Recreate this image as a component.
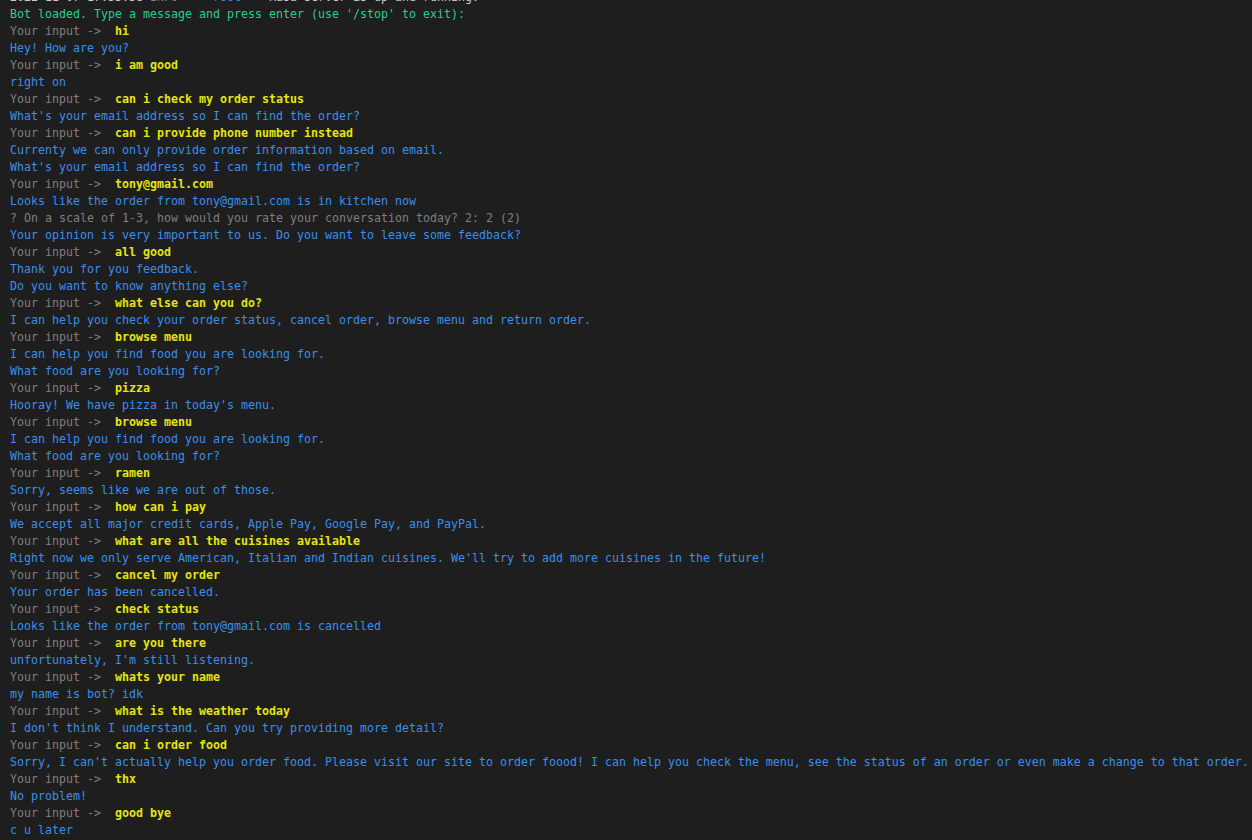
type Line =
  | { kind: 'in'; text: string }
  | { kind: 'bot'; text: string }
  | { kind: 'info'; text: string }
  | { kind: 'ask'; text: string }
  | { kind: 'log' };

const lines: Line[] = [
  { kind: 'log' },
  { kind: 'info', text: "Bot loaded. Type a message and press enter (use '/stop' to exit):" },
  { kind: 'in', text: 'hi' },
  { kind: 'bot', text: 'Hey! How are you?' },
  { kind: 'in', text: 'i am good' },
  { kind: 'bot', text: 'right on' },
  { kind: 'in', text: 'can i check my order status' },
  { kind: 'bot', text: "What's your email address so I can find the order?" },
  { kind: 'in', text: 'can i provide phone number instead' },
  { kind: 'bot', text: 'Currenty we can only provide order information based on email.' },
  { kind: 'bot', text: "What's your email address so I can find the order?" },
  { kind: 'in', text: 'tony@gmail.com' },
  { kind: 'bot', text: 'Looks like the order from tony@gmail.com is in kitchen now' },
  { kind: 'ask', text: '? On a scale of 1-3, how would you rate your conversation today? 2: 2 (2)' },
  { kind: 'bot', text: 'Your opinion is very important to us. Do you want to leave some feedback?' },
  { kind: 'in', text: 'all good' },
  { kind: 'bot', text: 'Thank you for you feedback.' },
  { kind: 'bot', text: 'Do you want to know anything else?' },
  { kind: 'in', text: 'what else can you do?' },
  { kind: 'bot', text: 'I can help you check your order status, cancel order, browse menu and return order.' },
  { kind: 'in', text: 'browse menu' },
  { kind: 'bot', text: 'I can help you find food you are looking for.' },
  { kind: 'bot', text: 'What food are you looking for?' },
  { kind: 'in', text: 'pizza' },
  { kind: 'bot', text: "Hooray! We have pizza in today's menu." },
  { kind: 'in', text: 'browse menu' },
  { kind: 'bot', text: 'I can help you find food you are looking for.' },
  { kind: 'bot', text: 'What food are you looking for?' },
  { kind: 'in', text: 'ramen' },
  { kind: 'bot', text: 'Sorry, seems like we are out of those.' },
  { kind: 'in', text: 'how can i pay' },
  { kind: 'bot', text: 'We accept all major credit cards, Apple Pay, Google Pay, and PayPal.' },
  { kind: 'in', text: 'what are all the cuisines available' },
  { kind: 'bot', text: "Right now we only serve American, Italian and Indian cuisines. We'll try to add more cuisines in the future!" },
  { kind: 'in', text: 'cancel my order' },
  { kind: 'bot', text: 'Your order has been cancelled.' },
  { kind: 'in', text: 'check status' },
  { kind: 'bot', text: 'Looks like the order from tony@gmail.com is cancelled' },
  { kind: 'in', text: 'are you there' },
  { kind: 'bot', text: "unfortunately, I'm still listening." },
  { kind: 'in', text: 'whats your name' },
  { kind: 'bot', text: 'my name is bot? idk' },
  { kind: 'in', text: 'what is the weather today' },
  { kind: 'bot', text: "I don't think I understand. Can you try providing more detail?" },
  { kind: 'in', text: 'can i order food' },
  { kind: 'bot', text: "Sorry, I can't actually help you order food. Please visit our site to order foood! I can help you check the menu, see the status of an order or even make a change to that order." },
  { kind: 'in', text: 'thx' },
  { kind: 'bot', text: 'No problem!' },
  { kind: 'in', text: 'good bye' },
  { kind: 'bot', text: 'c u later' },
];

function Row({ line }: { line: Line }) {
  if (line.kind === 'log') {
    // rasa 시작 로그 (위쪽이 잘려 있음)
    return (
      <div>
        <span className="text-[#cccccc]">2022-11-07 17:53:58 </span>
        <span className="text-[#7f7f7f]">INFO     </span>
        <span className="text-[#3b8eea]">root</span>
        <span className="text-[#cccccc]">  - Rasa server is up and running.</span>
      </div>
    );
  }
  if (line.kind === 'in') {
    return (
      <div>
        <span className="text-[#7f7f7f]">Your input -&gt;  </span>
        <span className="font-bold text-[#e5e510]">{line.text}</span>
      </div>
    );
  }
  if (line.kind === 'info') return <div className="text-[#23d18b]">{line.text}</div>;
  if (line.kind === 'ask') return <div className="text-[#7f7f7f]">{line.text}</div>;
  return <div className="text-[#3b8eea]">{line.text}</div>;
}

export default function App() {
  return (
    <div className="w-full h-[840px] overflow-hidden bg-[#1e1e1e]">
      <div className="-mt-[11px] pl-[10px] whitespace-pre font-['DejaVu_Sans_Mono',monospace] text-[11.63px] leading-[17px]">
        {lines.map((l, i) => (
          <Row key={i} line={l} />
        ))}
      </div>
    </div>
  );
}
